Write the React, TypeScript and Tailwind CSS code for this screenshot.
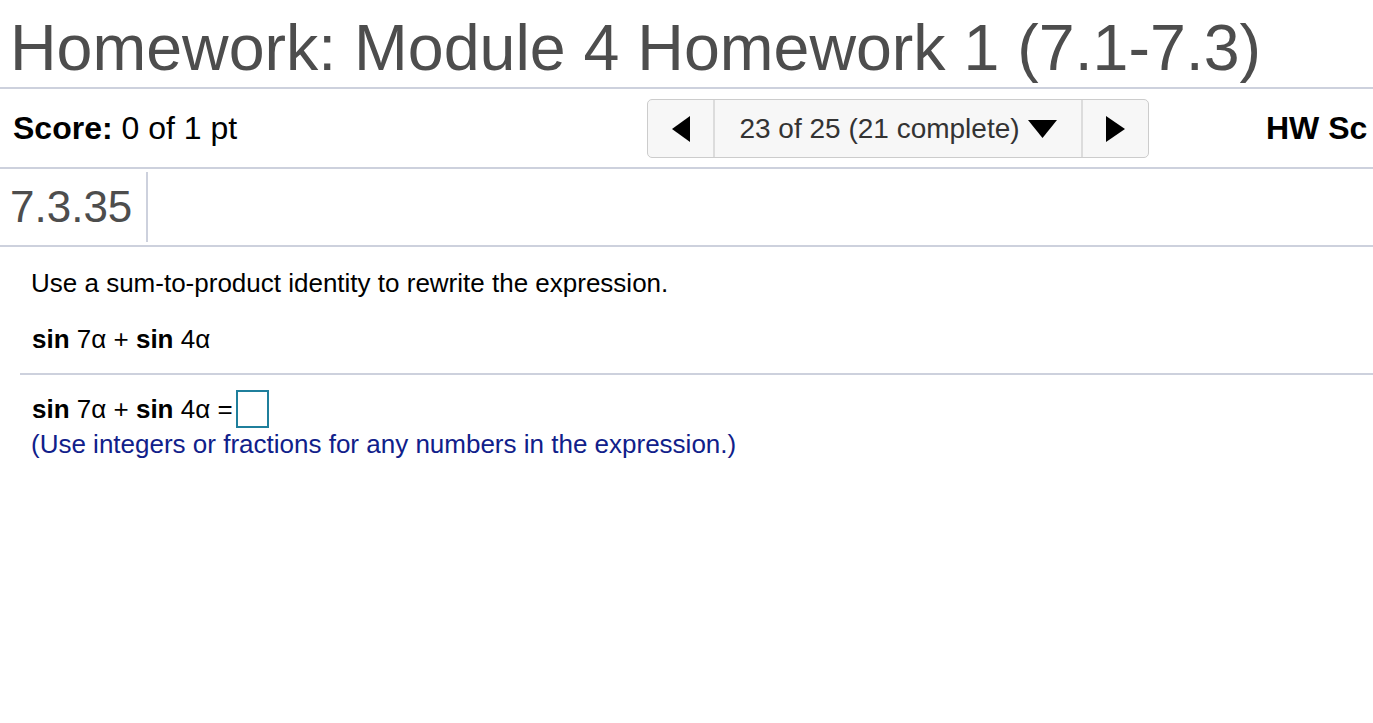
import React from "react";

const F = { fontFamily: '"Liberation Sans", Arial, sans-serif' };

function Tri({ dir }: { dir: "left" | "right" | "down" }) {
  if (dir === "left")
    return (
      <svg width="18" height="26" viewBox="0 0 18 26" className="block">
        <polygon points="18,0 18,26 0,13" fill="#000" />
      </svg>
    );
  if (dir === "right")
    return (
      <svg width="19" height="26" viewBox="0 0 19 26" className="block">
        <polygon points="0,0 0,26 19,13" fill="#000" />
      </svg>
    );
  return (
    <svg width="29" height="18" viewBox="0 0 29 18" className="block">
      <polygon points="0,0 29,0 14.5,18" fill="#000" />
    </svg>
  );
}

export default function App() {
  return (
    <div className="w-[1373px] h-[723px] overflow-hidden bg-white" style={F}>
      <div className="h-[87px] pl-[10px] text-[64.5px] leading-normal text-[#4d4d4d] whitespace-nowrap">
        Homework: Module 4 Homework 1 (7.1-7.3)
      </div>
      <div className="h-[2px] bg-[#cdd1dd]" />
      <div className="h-[78px] flex items-center whitespace-nowrap overflow-hidden">
        <div className="w-[647px] shrink-0 pl-[13px] text-[32px] text-black">
          <span className="font-bold">Score:</span> 0 of 1 pt
        </div>
        <div className="w-[502px] h-[59px] shrink-0 flex border border-[#cccccc] rounded-[5px] bg-[#f7f7f7] mt-[1px]">
          <div className="w-[67px] flex items-center justify-center border-r-2 border-[#dcdcdc]">
            <Tri dir="left" />
          </div>
          <div className="flex-1 flex items-center justify-center gap-[8px] text-[28px] text-[#333]">
            <span>23 of 25 (21 complete)</span>
            <Tri dir="down" />
          </div>
          <div className="w-[67px] flex items-center justify-center border-l-2 border-[#dcdcdc]">
            <Tri dir="right" />
          </div>
        </div>
        <div className="ml-[117px] shrink-0 text-[32px] font-bold text-black">HW Sc</div>
      </div>
      <div className="h-[2px] bg-[#cdd1dd]" />
      <div className="h-[76px] flex items-stretch">
        <div className="w-[148px] my-[3px] pl-[10px] border-r-2 border-[#cdd1dd] flex items-center text-[44px] text-[#4d4d4d]">
          7.3.35
        </div>
      </div>
      <div className="h-[2px] bg-[#cdd1dd]" />
      <div className="pl-[20px] pt-[22px] text-[26px] leading-[28px] text-black">
        <div className="pl-[11px]">Use a sum-to-product identity to rewrite the expression.</div>
        <div className="pl-[12px] mt-[28px] whitespace-nowrap">
          <span className="font-bold">sin</span> 7α + <span className="font-bold">sin</span> 4α
        </div>
        <div className="h-[2px] bg-[#cdd1dd] mt-[20px]" />
        <div className="pl-[12px] mt-[15px] h-[38px] flex items-center whitespace-nowrap">
          <span>
            <span className="font-bold">sin</span> 7α + <span className="font-bold">sin</span> 4α =
          </span>
          <span className="ml-[3px] w-[33px] h-[38px] border-2 border-[#1f7f9c] inline-block" />
        </div>
        <div className="pl-[11px] mt-[2px] text-[#10208a]">
          (Use integers or fractions for any numbers in the expression.)
        </div>
      </div>
    </div>
  );
}
